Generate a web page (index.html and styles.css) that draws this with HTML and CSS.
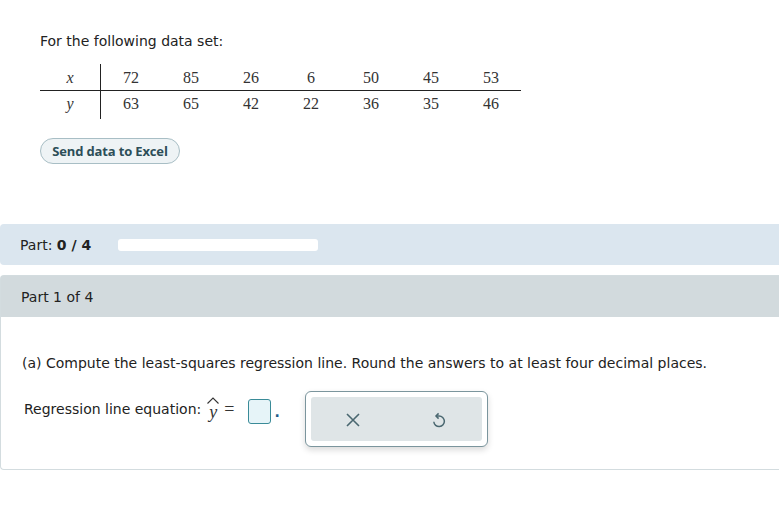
FILE: index.html
```html
<!DOCTYPE html>
<html lang="en">
<head>
<meta charset="utf-8">
<link rel="stylesheet" href="styles.css">
</head>
<body>
<div class="intro">
  <p class="lead">For the following data set:</p>
  <table class="data">
    <tr class="r1"><th>x</th><td>72</td><td>85</td><td>26</td><td>6</td><td>50</td><td>45</td><td>53</td></tr>
    <tr class="r2"><th>y</th><td>63</td><td>65</td><td>42</td><td>22</td><td>36</td><td>35</td><td>46</td></tr>
  </table>
  <button class="excel">Send data to Excel</button>
</div>

<div class="progress">
  <span class="plabel">Part: <b>0 / 4</b></span>
  <span class="pbar"></span>
</div>

<section class="part">
  <header class="part-head">Part 1 of 4</header>
  <div class="part-body">
    <p class="question">(a) Compute the least-squares regression line. Round the answers to at least four decimal places.</p>
    <div class="answer-row">
      <div class="eq">
        <span>Regression line equation:</span>
        <span class="yhat"><svg class="hat" width="12" height="7" viewBox="0 0 12 7"><polyline points="0.5,6.5 6,1 11.5,6.5" fill="none" stroke="#333" stroke-width="1.1"/></svg><i>y</i></span>
        <span class="equals">=</span>
        <span class="blank"></span>
        <span class="dot">.</span>
      </div>
      <div class="tools">
        <div class="tools-inner">
          <button class="tool" aria-label="clear"><svg width="14" height="14" viewBox="0 0 14 14"><path d="M1 1 L13 13 M13 1 L1 13" stroke="#4a6770" stroke-width="1.6" fill="none"/></svg></button>
          <button class="tool" aria-label="undo"><svg width="16" height="18" viewBox="0 0 16 18"><path d="M5.5 5 H8 A5.3 5.3 0 1 1 2.8 10.8" stroke="#4a6770" stroke-width="1.5" fill="none"/><path d="M7.6 2.4 L5 5 L7.6 7.6" stroke="#4a6770" stroke-width="1.5" fill="none"/></svg></button>
        </div>
      </div>
    </div>
  </div>
</section>
</body>
</html>
```
FILE: styles.css
```css
body {
  margin: 0;
  font-family: "DejaVu Sans", Verdana, sans-serif;
  font-size: 14px;
  color: #222;
  background: #fff;
}
.intro {
  padding: 32px 0 0 40px;
  height: 192px;
  box-sizing: border-box;
}
.lead {
  margin: 0;
  line-height: 18px;
}
.data {
  margin-top: 14px;
  border-collapse: collapse;
  font-family: "Liberation Serif", "Times New Roman", serif;
  font-size: 16px;
  color: #333;
}
.data th {
  width: 60px;
  font-weight: normal;
  font-style: italic;
  text-align: center;
  border-right: 1.5px solid #222;
  padding: 0;
}
.data td {
  width: 60px;
  text-align: center;
  padding: 0;
}
.data .r1 th, .data .r1 td {
  height: 25px;
  border-bottom: 1.5px solid #222;
  vertical-align: middle;
  padding-top: 1px;
}
.data .r2 th, .data .r2 td {
  height: 24px;
  vertical-align: top;
  padding-top: 4px;
}
.excel {
  margin-top: 19px;
  height: 26px;
  width: 140px;
  border: 1px solid #a8bec5;
  border-radius: 13px;
  background: #eef3f5;
  color: #2c4e58;
  font-family: "Open Sans", "Noto Sans", sans-serif;
  font-weight: 700;
  font-size: 13px;
  letter-spacing: -0.15px;
  padding: 0;
}
.progress {
  margin-top: 32px;
  height: 41px;
  background: #dbe6ef;
  border-radius: 4px 0 0 4px;
  display: flex;
  align-items: center;
  padding-left: 20px;
}
.plabel b {
  font-weight: 700;
}
.pbar {
  margin-left: 27px;
  width: 200px;
  height: 12px;
  background: #fff;
  border-radius: 3px;
}
.part {
  margin-top: 10px;
  border: 1px solid #d3dcdf;
  border-right: none;
  border-radius: 4px 0 0 4px;
  height: 195px;
  box-sizing: border-box;
}
.part-head {
  height: 41px;
  background: #d2dadd;
  display: flex;
  align-items: center;
  padding-left: 20px;
}
.part-body {
  padding: 37px 0 0 21px;
}
.question {
  margin: 0;
  line-height: 18px;
}
.answer-row {
  display: flex;
  align-items: flex-start;
  margin-top: 18px;
  padding-left: 2px;
}
.eq {
  display: flex;
  align-items: center;
  height: 30px;
  margin-top: 4px;
}
.yhat {
  display: inline-flex;
  flex-direction: column;
  align-items: center;
  margin-left: 6px;
  font-family: "Liberation Serif", "Times New Roman", serif;
  font-size: 18px;
  line-height: 14px;
  color: #333;
  position: relative;
  top: -1px;
}
.yhat .hat {
  margin-bottom: 1px;
}
.equals {
  font-family: "Liberation Serif", serif;
  font-size: 18px;
  margin-left: 5px;
  color: #333;
}
.blank {
  width: 21px;
  height: 23px;
  border: 1.5px solid #3a8b98;
  border-radius: 3px;
  background: #e6f4f8;
  margin-left: 14px;
  margin-top: 4px;
}
.dot {
  margin-left: 3px;
  color: #1f5a8a;
  font-weight: bold;
  align-self: flex-end;
  margin-bottom: 4px;
}
.tools {
  margin-left: 25px;
  margin-top: 1px;
  width: 183px;
  height: 56px;
  box-sizing: border-box;
  border: 1px solid #7b959d;
  border-radius: 6px;
  background: #fff;
  padding: 5px;
  box-shadow: 0 3px 6px rgba(0,0,0,0.15);
}
.tools-inner {
  height: 100%;
  background: #dfe5e7;
  border-radius: 3px;
  display: flex;
  justify-content: space-around;
  align-items: center;
}
.tool {
  background: none;
  border: none;
  padding: 0;
  display: flex;
  align-items: center;
  justify-content: center;
  width: 40px;
  height: 30px;
  margin-top: 2px;
}
```
